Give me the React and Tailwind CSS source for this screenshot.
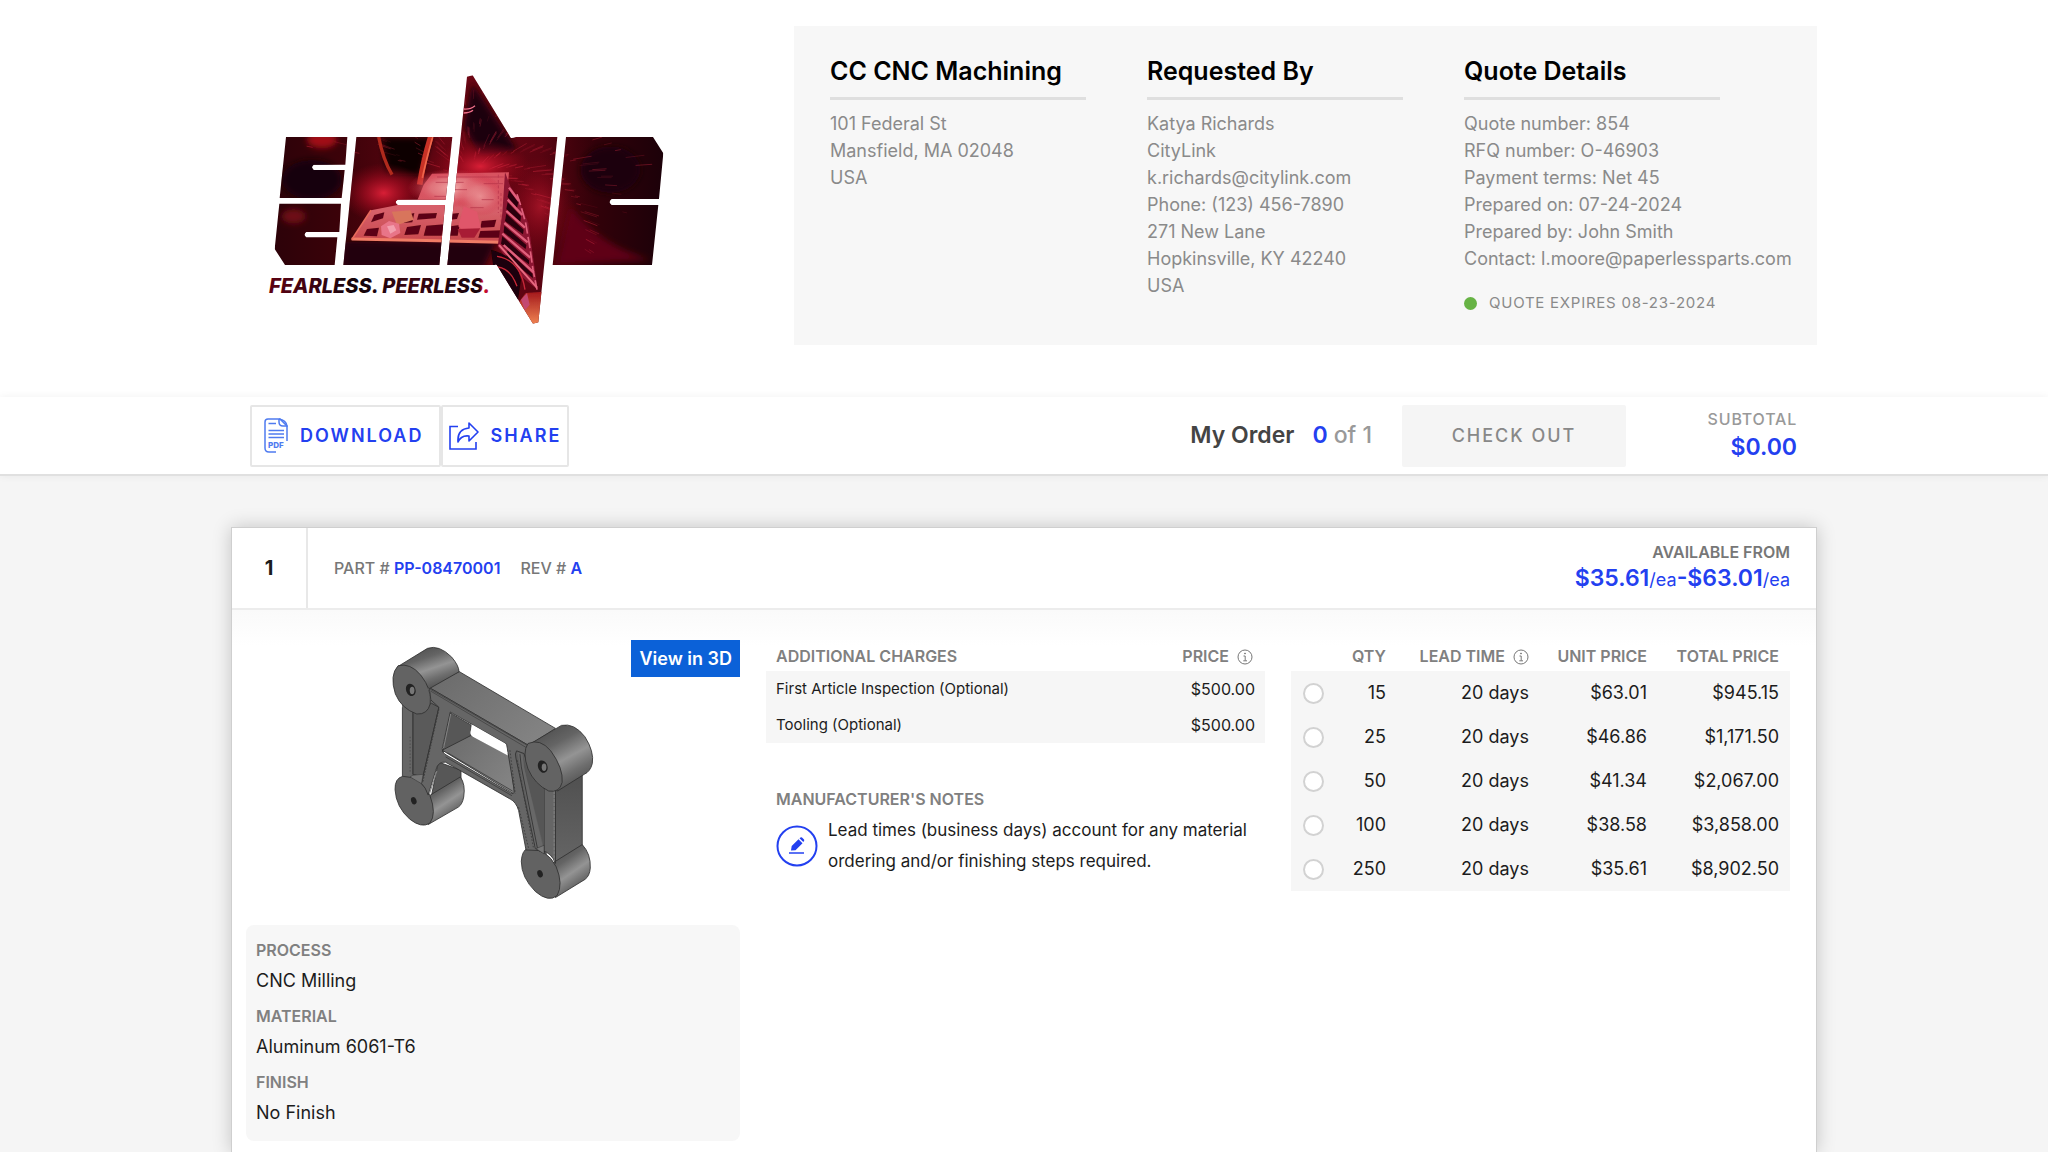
import React, {useState} from 'react';

const requestedBy = [
	'Katya Richards',
	'CityLink',
	'k.richards@citylink.com',
	'Phone: (123) 456-7890',
	'271 New Lane',
	'Hopkinsville, KY 42240',
	'USA',
];

const quoteDetails = [
	'Quote number: 854',
	'RFQ number: O-46903',
	'Payment terms: Net 45',
	'Prepared on: 07-24-2024',
	'Prepared by: John Smith',
	'Contact: l.moore@paperlessparts.com',
];

const charges = [
	{name: 'First Article Inspection (Optional)', price: '$500.00'},
	{name: 'Tooling (Optional)', price: '$500.00'},
];

const quantities = [
	{qty: 15, lead: '20 days', unit: '$63.01', total: '$945.15'},
	{qty: 25, lead: '20 days', unit: '$46.86', total: '$1,171.50'},
	{qty: 50, lead: '20 days', unit: '$41.34', total: '$2,067.00'},
	{qty: 100, lead: '20 days', unit: '$38.58', total: '$3,858.00'},
	{qty: 250, lead: '20 days', unit: '$35.61', total: '$8,902.50'},
];

const specs = [
	{label: 'PROCESS', value: 'CNC Milling'},
	{label: 'MATERIAL', value: 'Aluminum 6061-T6'},
	{label: 'FINISH', value: 'No Finish'},
];

// streaks flying away from the cutter
const sparks = Array.from({length: 240}, (_, i) => {
	const angle = -2.9 + (((i * 47) % 240) / 240) * 3.7;
	const start = 60 + ((i * 83) % 440);
	const length = 12 + ((i * 29) % 46);
	return {
		x1: 660 + Math.cos(angle) * start,
		y1: 350 + Math.sin(angle) * start * 0.7,
		x2: 660 + Math.cos(angle) * (start + length),
		y2: 350 + Math.sin(angle) * (start + length) * 0.7,
		opacity: 0.15 + ((i * 13) % 10) / 22,
	};
});

function Logo() {
	return (
		<svg viewBox="50 40 1200 760" className="w-[400px]" role="img" aria-label="CNC logo">
			<defs>
				<clipPath id="letters">
					<path d="M107 232H291L285 315H190Q180 323 190 331H283L274 415H88Z" />
					<path d="M87 432H272L267 517H168Q158 525 168 533H261L253 616H104L73 568Z" />
					<path d="M318 232H606L586 420H442Q430 428 442 436H584L567 616H279Z" />
					<path d="M650 51L667 47L781 234Q784 237 797 232H921L864 788L848 792L740 617Q737 612 732 616H591L631 232Z" />
					<path d="M947 232H1208L1239 281L1226 418H1084Q1072 428 1084 436H1224L1205 616H907Z" />
				</clipPath>
				<linearGradient id="base" x1="0" x2="1">
					<stop offset="0" stopColor="#2b0209" />
					<stop offset="0.18" stopColor="#3b0209" />
					<stop offset="0.5" stopColor="#6d0614" />
					<stop offset="0.68" stopColor="#5a0411" />
					<stop offset="0.82" stopColor="#320109" />
					<stop offset="1" stopColor="#1b0109" />
				</linearGradient>
				<radialGradient id="glow">
					<stop offset="0" stopColor="#d81f36" />
					<stop offset="0.45" stopColor="#a80d22" stopOpacity="0.7" />
					<stop offset="1" stopColor="#8a0415" stopOpacity="0" />
				</radialGradient>
				<radialGradient id="pale">
					<stop offset="0" stopColor="#f0a3a3" />
					<stop offset="0.5" stopColor="#e2787f" stopOpacity="0.8" />
					<stop offset="1" stopColor="#d2233b" stopOpacity="0" />
				</radialGradient>
				<linearGradient id="plate" x1="0" y1="0" x2="0" y2="1">
					<stop offset="0" stopColor="#d85260" />
					<stop offset="0.55" stopColor="#d6606a" />
					<stop offset="1" stopColor="#c9484c" />
				</linearGradient>
				<linearGradient id="tip" x1="0" y1="0" x2="0" y2="1">
					<stop offset="0" stopColor="#a3181c" />
					<stop offset="1" stopColor="#f58a55" />
				</linearGradient>
				<linearGradient id="tagline" x1="0" x2="1">
					<stop offset="0" stopColor="#5d0213" />
					<stop offset="0.2" stopColor="#3c0310" />
					<stop offset="0.4" stopColor="#12040a" />
					<stop offset="0.65" stopColor="#3a0410" />
					<stop offset="0.95" stopColor="#16030a" />
					<stop offset="0.965" stopColor="#c40c2c" />
				</linearGradient>
				<filter id="soft" x="-30%" y="-30%" width="160%" height="160%">
					<feGaussianBlur stdDeviation="9" />
				</filter>
				<filter id="focus">
					<feGaussianBlur stdDeviation="1.8" />
				</filter>
			</defs>
			<g clipPath="url(#letters)">
				<rect x="50" y="40" width="1200" height="760" fill="url(#base)" />
				<g filter="url(#soft)">
					<ellipse cx="185" cy="360" rx="90" ry="60" fill="#150208" />
					<ellipse cx="215" cy="240" rx="45" ry="26" fill="#a10e18" />
					<ellipse cx="130" cy="470" rx="36" ry="22" fill="#6e0a12" />
					<path d="M665 70L800 270L690 290L640 200Z" fill="#1c020a" />
					<path d="M395 232H545L510 345H410Z" fill="#0d0206" />
					<ellipse cx="1080" cy="330" rx="90" ry="70" fill="#1c010a" />
					<path d="M960 440Q1050 560 1200 600L920 616Z" fill="#5e0512" />
					<path d="M280 545H740L700 625H280Z" fill="#240207" />
				</g>
				<ellipse cx="400" cy="400" rx="130" ry="90" fill="url(#glow)" />
				<ellipse cx="690" cy="320" rx="150" ry="80" fill="url(#glow)" />
				<ellipse cx="870" cy="440" rx="110" ry="150" fill="url(#glow)" opacity="0.55" />
				<g stroke="#e2304a" strokeWidth="2">
					{sparks.map((s, i) => (
						<line key={i} x1={s.x1} y1={s.y1} x2={s.x2} y2={s.y2} opacity={s.opacity} />
					))}
				</g>
				<g filter="url(#focus)">
					<path d="M385 232Q398 300 425 345" stroke="#b02a1c" strokeWidth="10" fill="none" />
					<path d="M541 232Q520 300 508 375" stroke="#c83226" strokeWidth="17" fill="none" />
					<path d="M547 232Q528 300 516 355" stroke="#f0684c" strokeWidth="5" fill="none" />
					<path d="M640 148Q660 150 674 138M640 160Q658 160 668 152" stroke="#f0708a" strokeWidth="4" fill="none" />

					{/* machined tray */}
					<path d="M545 342L776 338L764 462L748 548L304 540L362 452L500 425L520 375Z" fill="url(#plate)" />
					<ellipse cx="610" cy="385" rx="140" ry="58" fill="url(#pale)" />
					<ellipse cx="690" cy="410" rx="75" ry="60" fill="url(#pale)" opacity="0.7" />
					<g stroke="#b02c44" strokeWidth="3" opacity="0.6">
						<path d="M560 352H760M556 368H640M700 372H758M610 390H650M694 420H730M660 444H700M552 410H590" />
						<path d="M744 345V460M752 400V520" strokeDasharray="9 7" />
					</g>
					<g fill="#5c0613">
						<path d="M372 466L402 458L398 476L362 488Z" />
						<path d="M466 466L492 460L486 488L460 490Z" />
						<path d="M505 462L560 460L556 476L500 480Z" />
						<path d="M604 462L626 460L620 478L598 480Z" />
						<path d="M350 508L386 504L380 530L340 528Z" />
						<path d="M470 502L512 496L504 524L462 526Z" />
						<path d="M528 498L582 494L574 528L520 528Z" />
						<path d="M600 500L628 496L622 528L596 528Z" />
						<path d="M694 484L738 480L732 502L690 504Z" />
						<path d="M690 514L756 512L750 534L684 534Z" />
					</g>
					<path d="M424 456L480 452L490 480L440 496Z" fill="#d8745c" />
					<path d="M392 500L416 484L446 492L450 520L420 536L394 526Z" fill="#e87488" />
					<path d="M410 500L430 496L438 512L420 522Z" fill="#f3a0ae" />
					<path d="M624 500L640 440L680 456L692 506L660 532Z" fill="#e0566a" />
					<path d="M622 508L690 506L672 534H634Z" fill="#a81e34" />
					<path d="M304 538Q530 542 748 548L764 520" stroke="#f07c66" strokeWidth="9" fill="none" />
					<path d="M304 540L362 452" stroke="#e86a5c" strokeWidth="5" />

					{/* fins down the right edge */}
					<path d="M764 338L780 380L800 410L834 490L862 690L800 640L742 560L756 460Z" fill="#8c1530" />
					<g fill="#2b020b">
						<path d="M776 392L804 428L800 444L772 412Z" />
						<path d="M772 428L812 470L810 486L768 448Z" />
						<path d="M768 462L820 510L818 524L764 484Z" />
						<path d="M762 498L828 556L826 568L760 518Z" />
						<path d="M756 530L836 602L836 614L752 552Z" />
						<path d="M772 572L846 642L848 656L768 590Z" />
					</g>
					<g stroke="#e0607c" strokeWidth="7" fill="none">
						<path d="M776 384L806 424M772 420L816 466M768 454L824 504M762 490L832 548M756 522L840 594M760 556L850 638" />
						<path d="M800 404L812 440L826 490L838 560L848 630L860 690" strokeWidth="5" strokeDasharray="34 10" />
					</g>
					<path d="M746 556L860 684" stroke="#e86a80" strokeWidth="6" />
					<path d="M722 570Q800 590 812 660L800 740L728 616Z" fill="#1b0207" />
					<path d="M740 590Q810 600 824 690M740 622Q780 624 800 680" stroke="#c8283a" strokeWidth="4" fill="none" />
					<path d="M800 735L826 700L880 696V800H830Z" fill="url(#tip)" />
					<path d="M812 720L830 700L838 735L824 752Z" fill="#c34a72" />
				</g>
			</g>
			<text
				x="56"
				y="699"
				fill="url(#tagline)"
				className="font-['Inter',sans-serif] text-[60px] font-extrabold italic"
			>
				FEARLESS. PEERLESS.
			</text>
		</svg>
	);
}

function PartDrawing() {
	return (
		<svg viewBox="60 70 630 775" className="w-[211px]" role="img" aria-label="Part PP-08470001">
			<defs>
				<linearGradient id="barrel" x1="0.200" y1="0" x2="0.700" y2="1">
					<stop offset="0" stopColor="#4c4c4c" />
					<stop offset="0.3" stopColor="#646464" />
					<stop offset="0.55" stopColor="#949494" />
					<stop offset="0.75" stopColor="#6e6e6e" />
					<stop offset="1" stopColor="#4a4a4a" />
				</linearGradient>
				<linearGradient id="top" x1="0" y1="0" x2="1" y2="0.6">
					<stop offset="0" stopColor="#6a6a6a" />
					<stop offset="1" stopColor="#828282" />
				</linearGradient>
				<linearGradient id="side" x1="0" y1="0" x2="0" y2="1">
					<stop offset="0" stopColor="#505050" />
					<stop offset="1" stopColor="#656565" />
				</linearGradient>
			</defs>
			<g stroke="#303030" strokeWidth="2.500" strokeLinejoin="round">
				{/* far faces */}
				<path d="M102 240H212L216 420L160 492H102Z" fill="#666" stroke="none" />
				<path d="M134 275L190 250L212 262L164 470L134 462Z" fill="#5a5a5a" />
				<path d="M210 425L278 450V500L190 525Z" fill="#575757" />
				<path d="M245 278L308 315L306 348L222 398Z" fill="#575757" />
				<path d="M222 390L308 346L424 405L438 522Z" fill="url(#top)" />
				<path d="M560 470L640 460V680L560 730Z" fill="url(#side)" />
				<path d="M432 380H480L534 490V706L490 690Z" fill="#5e5e5e" stroke="none" />

				{/* lower left boss */}
				<path d="M185 525L276 470Q292 492 286 530Q282 552 270 560L180 612Z" fill="url(#barrel)" />
				<path d="M104 468Q160 468 185 525Q206 580 185 608Q160 624 125 596Q84 560 81 508Q80 474 104 468Z" fill="#626262" />
				{/* lower right boss */}
				<path d="M550 728L640 672Q666 700 664 742Q662 766 648 776L560 830Z" fill="url(#barrel)" />
				<path d="M476 684Q536 684 562 738Q584 790 565 824Q540 846 500 812Q458 770 458 722Q460 690 476 684Z" fill="#626262" />

				{/* top bar */}
				<path d="M183 203L272 155L560 325L480 376Z" fill="url(#top)" />
				{/* front web */}
				<path
					d="M183 203L480 376L560 500V728Q548 696 520 690L472 688L450 570Q442 544 425 536L232 426Q214 424 206 440L180 524Q172 500 160 490L212 262L188 240Z
					M246 276L222 385Q220 396 230 402L430 520Q440 520 436 504L414 372Z
					M444 392Q438 400 442 414L500 684L526 698V500Q490 480 466 400Z"
					fill="#666"
					fillRule="evenodd"
				/>
				<path d="M312 314L410 370L418 406L320 354Q304 346 306 336Z" fill="#fff" stroke="none" />
				<path d="M462 402Q480 480 526 505V682L466 440Z" fill="#565656" stroke="none" />
				<path d="M446 396L462 402L466 440L524 684L502 686Z" fill="#686868" stroke="none" />
				<path d="M502 684L526 674V700Z" fill="#777" strokeWidth="1.500" />
				<path d="M454 402L458 440L506 682" fill="none" />
				<path d="M103 262V468M136 280V462" fill="none" stroke="#444" />
				<path d="M134 465L165 462L160 490L126 470Z" fill="#777" strokeWidth="1.500" />
				<path d="M188 214L476 384L508 392M186 208L480 378" fill="none" stroke="#444" />
				<path d="M238 398L432 512M232 410L430 526" fill="none" stroke="#3c3c3c" />
				<path d="M247 282L226 384" fill="none" stroke="#858585" strokeWidth="3" />
				<path d="M206 452L184 520" fill="none" stroke="#858585" strokeWidth="3" />
				<path d="M556 512V722" fill="none" stroke="#8c8c8c" strokeDasharray="9 3" />
				<path d="M424 390L440 520M450 560L480 684M446 420L494 680" fill="none" strokeDasharray="5 5" stroke="#3a3a3a" />
				<path d="M212 268L164 485" fill="none" strokeDasharray="5 4" stroke="#3a3a3a" />
				<path d="M126 350V460" fill="none" strokeDasharray="4 6" stroke="#444" />

				{/* upper left boss */}
				<path d="M90 140L178 86Q212 74 250 112Q272 138 272 156L184 206Z" fill="url(#barrel)" />
				<path d="M90 138Q126 128 158 166Q192 210 186 252Q178 284 146 282Q100 266 82 222Q64 166 90 138Z" fill="#636363" />
				{/* upper right boss */}
				<path d="M490 368L578 316Q616 308 648 350Q676 394 670 430Q664 454 646 462L566 512Z" fill="url(#barrel)" />
				<path d="M478 370Q514 354 546 392Q584 444 580 486Q572 518 540 512Q498 492 478 446Q460 396 478 370Z" fill="#636363" />
			</g>
			<g fill="#222">
				<ellipse cx="128" cy="210" rx="14" ry="19" transform="rotate(-20 128 210)" />
				<ellipse cx="522" cy="439" rx="14" ry="19" transform="rotate(-20 522 439)" />
				<ellipse cx="137" cy="541" rx="8" ry="11" transform="rotate(-20 137 541)" />
				<ellipse cx="514" cy="759" rx="8" ry="11" transform="rotate(-20 514 759)" />
			</g>
			<ellipse cx="132" cy="212" rx="7" ry="11" fill="#777" />
			<ellipse cx="526" cy="441" rx="7" ry="11" fill="#777" />
		</svg>
	);
}

function PdfIcon() {
	return (
		<svg viewBox="0 0 24 35" className="h-[35px] w-6" fill="none" stroke="#4f7bf0" strokeWidth="1.500" aria-hidden="true">
			<path d="M23 23V8L16 1H4Q1 1 1 4V30Q1 34 5 34H12" />
			<path d="M15 1V4Q15 8 19 8H23Q22 2 15 1" />
			<path d="M4.500 5.500H12M4.500 12.500H20M4.500 16H20M4.500 19.500H20" />
			<text x="4" y="30" fill="#4f7bf0" stroke="none" className="font-['Inter',sans-serif] text-[8px] font-extrabold tracking-normal">
				PDF
			</text>
		</svg>
	);
}

function ShareIcon() {
	return (
		<svg viewBox="0 0 30 28" className="h-7 w-[30px]" fill="none" stroke="#2340f0" strokeWidth="1.600" aria-hidden="true">
			<path d="M9 4.500H1V27H27V20" />
			<path d="M20 1L29 10L20 19V14Q12 13 9 20Q8 7 20 6Z" strokeLinejoin="round" />
		</svg>
	);
}

function InfoIcon() {
	return (
		<svg viewBox="0 0 16 16" className="ml-2 inline size-4" fill="none" stroke="#777" aria-hidden="true">
			<circle cx="8" cy="8" r="7" />
			<path d="M6.500 7H8.200V11.500M6.300 11.800H10" />
			<circle cx="8" cy="4.500" r="0.500" fill="#777" />
		</svg>
	);
}

function NoteIcon() {
	return (
		<svg viewBox="0 0 42 42" className="size-[42px] shrink-0" aria-hidden="true">
			<circle cx="21" cy="21" r="19.500" fill="none" stroke="#2340f0" strokeWidth="2" />
			<path d="M15 25.500L15.700 21L22.500 14.200L26.500 18.200L19.500 25.200ZM23.500 13.300L24.500 12.400Q25.300 11.900 26 12.500L28 14.500Q28.600 15.200 28 16L27.300 17Z" fill="#2340f0" />
			<path d="M13 28H28" stroke="#2340f0" strokeWidth="1.500" />
		</svg>
	);
}

function InfoColumn({title, lines, children}) {
	return (
		<div>
			<h2 className="w-64 border-b-3 border-[#dfdfdf] pb-[10px] text-[25px] leading-8 font-semibold text-black">{title}</h2>
			<ul className="mt-[10px] text-lg leading-[27px] whitespace-nowrap text-[#8a8a8a]">
				{lines.map((line) => (
					<li key={line}>{line}</li>
				))}
			</ul>
			{children}
		</div>
	);
}

export default function App() {
	const [selected, setSelected] = useState(null);

	return (
		<div className="relative flex min-h-screen flex-col bg-white font-['Inter',sans-serif] text-[#1c1c1c]">
			<header className="mx-auto grid w-full max-w-[1586px] grid-cols-[563fr_1023fr] pt-[26px] pb-[52px]">
				<div className="flex items-center pt-[28px] pl-9">
					<Logo />
				</div>
				<div className="grid min-h-[319px] grid-cols-3 bg-[#f7f7f7] px-9 pt-[29px]">
					<InfoColumn title="CC CNC Machining" lines={['101 Federal St', 'Mansfield, MA 02048', 'USA']} />
					<InfoColumn title="Requested By" lines={requestedBy} />
					<InfoColumn title="Quote Details" lines={quoteDetails}>
						<p className="mt-[19px] flex items-center text-[15px] leading-6 tracking-wider whitespace-nowrap text-[#8a8a8a]">
							<span className="mr-3 size-[13px] rounded-full bg-[#67b345]" />
							QUOTE EXPIRES 08-23-2024
						</p>
					</InfoColumn>
				</div>
			</header>

			<section className="z-10 border-b-2 border-[#e0e0e0] bg-white shadow-[0_0_8px_rgba(0,0,0,0.06)]">
				<div className="mx-auto flex h-[77px] w-full max-w-[1586px] items-center justify-between pr-5 pl-[19px]">
					<div className="flex">
						<button className="flex h-[62px] items-center rounded-xs border-2 border-[#e6e6e6] px-3 text-lg font-semibold tracking-[2px] text-[#2340f0]">
							<PdfIcon />
							<span className="pr-1 pl-3">DOWNLOAD</span>
						</button>
						<button className="flex h-[62px] items-center rounded-xs border-2 border-[#e6e6e6] px-[6px] text-lg font-semibold tracking-[2px] text-[#2340f0]">
							<ShareIcon />
							<span className="pl-[11px]">SHARE</span>
						</button>
					</div>
					<div className="flex items-center">
						<p className="text-[23px] font-semibold text-[#444]">My Order</p>
						<p className="ml-[18px] text-[23px] font-medium text-[#999]">
							<span className="font-semibold text-[#2340f0]">0</span> of 1
						</p>
						<button className="ml-[30px] h-[62px] w-56 rounded-xs bg-[#f5f5f5] text-lg font-medium tracking-[2px] text-[#888]">
							CHECK OUT
						</button>
						<div className="w-[171px] pb-0.5 text-right">
							<p className="text-base leading-6 font-medium tracking-wider text-[#999]">SUBTOTAL</p>
							<p className="text-[23px] leading-8 font-semibold text-[#2340f0]">$0.00</p>
						</div>
					</div>
				</div>
			</section>

			<main className="flex flex-1 flex-col bg-[#f5f5f5] pt-[51px]">
				<article className="mx-auto w-full max-w-[1586px] flex-1 border border-b-0 border-[#cfcfcf] bg-white shadow-[0_0_18px_rgba(0,0,0,0.2)]">
					<div className="flex h-[82px] items-center border-b-2 border-[#ececec]">
						<p className="flex w-[76px] items-center justify-center self-stretch border-r-2 border-[#e8e8e8] text-xl font-bold">1</p>
						<p className="ml-[26px] text-base font-medium text-[#777]">
							PART # <a href="#part" className="font-semibold text-[#2340f0]">PP-08470001</a>
						</p>
						<p className="ml-5 text-base font-medium text-[#777]">
							REV # <a href="#rev" className="font-semibold text-[#2340f0]">A</a>
						</p>
						<div className="mr-[26px] ml-auto pb-[3px] text-right">
							<p className="text-base leading-6 font-semibold text-[#777]">AVAILABLE FROM</p>
							<p className="text-[23px] leading-7 font-semibold text-[#2340f0]">
								$35.61<span className="text-lg font-normal">/ea</span>-$63.01<span className="text-lg font-normal">/ea</span>
							</p>
						</div>
					</div>

					<div className="grid grid-cols-[494fr_499fr_499fr] gap-[26px] bg-linear-to-b from-[#fafafa] to-white to-[36px] pt-[30px] pr-[26px] pb-3 pl-[14px]">
						<div>
							<div className="relative flex justify-center pt-[3px]">
								<PartDrawing />
								<button className="absolute top-0 right-0 bg-[#0b61d8] px-2 text-lg leading-[37px] font-semibold text-white">
									View in 3D
								</button>
							</div>
							<dl className="mt-[22px] rounded-lg bg-[#f7f7f7] px-[10px] pt-[10px] pb-2">
								{specs.map((spec) => (
									<div key={spec.label} className="mb-1">
										<dt className="text-base leading-[30px] font-semibold text-[#808080]">{spec.label}</dt>
										<dd className="text-lg leading-8">{spec.value}</dd>
									</div>
								))}
							</dl>
						</div>

						<div>
							<table className="w-full border-collapse text-[15px]">
								<thead>
									<tr className="h-[31px] align-middle text-base text-[#808080]">
										<th className="pl-[10px] text-left font-semibold">ADDITIONAL CHARGES</th>
										<th className="pr-3 text-right font-semibold">
											PRICE
											<InfoIcon />
										</th>
									</tr>
								</thead>
								<tbody className="bg-[#f6f6f6]">
									{charges.map((charge) => (
										<tr key={charge.name} className="h-9">
											<td className="pl-[10px]">{charge.name}</td>
											<td className="pr-[10px] text-right text-base">{charge.price}</td>
										</tr>
									))}
								</tbody>
							</table>
							<h3 className="mt-[44px] pl-[10px] text-base leading-6 font-semibold text-[#808080]">MANUFACTURER'S NOTES</h3>
							<div className="mt-1 flex items-center gap-[10px] pl-[10px]">
								<NoteIcon />
								<p className="text-[17px] leading-[31px]">
									Lead times (business days) account for any material ordering and/or finishing steps required.
								</p>
							</div>
						</div>

						<div>
							<table className="w-full border-collapse text-right text-lg">
								<thead>
									<tr className="h-[31px] align-middle text-base whitespace-nowrap text-[#808080]">
										<th className="w-[45px]" />
										<th className="w-[50px] font-semibold">QTY</th>
										<th className="w-[143px] font-semibold">
											LEAD TIME
											<InfoIcon />
										</th>
										<th className="w-[118px] font-semibold">UNIT PRICE</th>
										<th className="w-[143px] pr-[11px] font-semibold">TOTAL PRICE</th>
									</tr>
								</thead>
								<tbody className="bg-[#f6f6f6]">
									{quantities.map((row) => (
										<tr key={row.qty} className="h-11">
											<td className="pl-3 text-left">
												<input
													type="radio"
													name="quantity"
													aria-label={`Quantity ${row.qty}`}
													checked={selected === row.qty}
													onChange={() => setSelected(row.qty)}
													className="block size-[21px] appearance-none rounded-full border-2 border-[#d2d2d2] bg-white checked:border-[#2340f0]"
												/>
											</td>
											<td>{row.qty}</td>
											<td>{row.lead}</td>
											<td>{row.unit}</td>
											<td className="pr-[11px]">{row.total}</td>
										</tr>
									))}
								</tbody>
							</table>
						</div>
					</div>
				</article>
			</main>
			<div className="absolute top-[398px] right-0 h-[72px] w-[5px] bg-[#c4c4c4]" />
		</div>
	);
}
